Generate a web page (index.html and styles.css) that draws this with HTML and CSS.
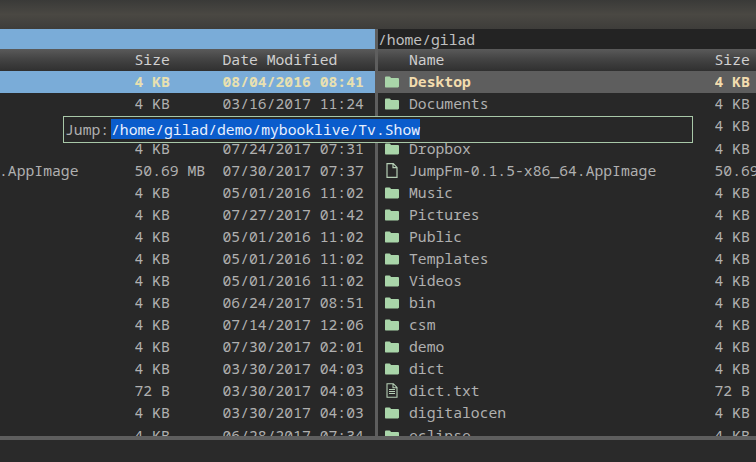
FILE: index.html
```html
<!DOCTYPE html>
<html lang="en">
<head>
<meta charset="utf-8">
<title>JumpFm</title>
<link rel="stylesheet" href="styles.css">
</head>
<body>
<svg class="defs" width="0" height="0" aria-hidden="true">
  <symbol id="folder" viewBox="0 0 14 12"><path d="M0 1.6C0 .9.5.4 1.2.4h3.2c.5 0 .8.2 1 .6l.5.9h7c.6 0 1.1.5 1.1 1.1v7.2c0 .7-.5 1.2-1.1 1.2H1.2C.5 11.600 0 11.100 0 10.400Z" fill="#a9d5a9"/></symbol>
  <symbol id="file" viewBox="0 0 12 15"><path d="M1 .7h6.300L11 4.400v9.900H1ZM7 .7v4h4" fill="none" stroke="#b5ceb5" stroke-width="1.200"/></symbol>
  <symbol id="text" viewBox="0 0 12 15"><path d="M1 .7h6.300L11 4.400v9.900H1ZM7 .7v4h4M3 6.500h6M3 8.500h6M3 10.500h6" fill="none" stroke="#b5ceb5" stroke-width="1.100"/></symbol>
</svg>
<div class="app">
  <div class="topbar"></div>
  <div class="panes">
    <section class="pane pane-left">
      <div class="path path-active"></div>
      <div class="row head"><span></span><span>Size</span><span>Date Modified</span></div>
      <div class="list">
        <div class="row selected-active"><span></span><span>4 KB</span><span>08/04/2016 08:41</span></div>
        <div class="row"><span></span><span>4 KB</span><span>03/16/2017 11:24</span></div>
        <div class="row"><span></span><span>4 KB</span><span>07/24/2017 07:31</span></div>
        <div class="row"><span></span><span>4 KB</span><span>07/24/2017 07:31</span></div>
        <div class="row"><span class="clipped-name">.AppImage</span><span>50.69 MB</span><span>07/30/2017 07:37</span></div>
        <div class="row"><span></span><span>4 KB</span><span>05/01/2016 11:02</span></div>
        <div class="row"><span></span><span>4 KB</span><span>07/27/2017 01:42</span></div>
        <div class="row"><span></span><span>4 KB</span><span>05/01/2016 11:02</span></div>
        <div class="row"><span></span><span>4 KB</span><span>05/01/2016 11:02</span></div>
        <div class="row"><span></span><span>4 KB</span><span>05/01/2016 11:02</span></div>
        <div class="row"><span></span><span>4 KB</span><span>06/24/2017 08:51</span></div>
        <div class="row"><span></span><span>4 KB</span><span>07/14/2017 12:06</span></div>
        <div class="row"><span></span><span>4 KB</span><span>07/30/2017 02:01</span></div>
        <div class="row"><span></span><span>4 KB</span><span>03/30/2017 04:03</span></div>
        <div class="row"><span></span><span>72 B</span><span>03/30/2017 04:03</span></div>
        <div class="row"><span></span><span>4 KB</span><span>03/30/2017 04:03</span></div>
        <div class="row"><span></span><span>4 KB</span><span>06/28/2017 07:34</span></div>
      </div>
    </section>
    <section class="pane pane-right">
      <div class="path">/home/gilad</div>
      <div class="row head"><span></span><span>Name</span><span>Size</span></div>
      <div class="list">
        <div class="row selected-idle"><svg class="icon"><use href="#folder"/></svg><span>Desktop</span><span>4 KB</span></div>
        <div class="row"><svg class="icon"><use href="#folder"/></svg><span>Documents</span><span>4 KB</span></div>
        <div class="row"><svg class="icon"><use href="#folder"/></svg><span>Downloads</span><span>4 KB</span></div>
        <div class="row"><svg class="icon"><use href="#folder"/></svg><span>Dropbox</span><span>4 KB</span></div>
        <div class="row"><svg class="icon icon-file"><use href="#file"/></svg><span>JumpFm-0.1.5-x86_64.AppImage</span><span>50.69 MB</span></div>
        <div class="row"><svg class="icon"><use href="#folder"/></svg><span>Music</span><span>4 KB</span></div>
        <div class="row"><svg class="icon"><use href="#folder"/></svg><span>Pictures</span><span>4 KB</span></div>
        <div class="row"><svg class="icon"><use href="#folder"/></svg><span>Public</span><span>4 KB</span></div>
        <div class="row"><svg class="icon"><use href="#folder"/></svg><span>Templates</span><span>4 KB</span></div>
        <div class="row"><svg class="icon"><use href="#folder"/></svg><span>Videos</span><span>4 KB</span></div>
        <div class="row"><svg class="icon"><use href="#folder"/></svg><span>bin</span><span>4 KB</span></div>
        <div class="row"><svg class="icon"><use href="#folder"/></svg><span>csm</span><span>4 KB</span></div>
        <div class="row"><svg class="icon"><use href="#folder"/></svg><span>demo</span><span>4 KB</span></div>
        <div class="row"><svg class="icon"><use href="#folder"/></svg><span>dict</span><span>4 KB</span></div>
        <div class="row"><svg class="icon icon-file"><use href="#text"/></svg><span>dict.txt</span><span>72 B</span></div>
        <div class="row"><svg class="icon"><use href="#folder"/></svg><span>digitalocen</span><span>4 KB</span></div>
        <div class="row"><svg class="icon"><use href="#folder"/></svg><span>eclipse</span><span>4 KB</span></div>
      </div>
    </section>
  </div>
  <div class="statusbar"></div>
  <div class="jump"><span class="jump-label">Jump:</span><span class="jump-value">/home/gilad/demo/mybooklive/Tv.Show</span></div>
</div>
</body>
</html>
```
FILE: styles.css
```css
* { box-sizing: border-box; }
html, body { margin: 0; height: 100%; overflow: hidden; }
body {
  background: #282828;
  color: #b0b0b0;
  font-family: "Noto Sans Mono", "DejaVu Sans Mono", "Liberation Mono", monospace;
  font-size: 14.72px;
}
.defs { position: absolute; }
.app { position: relative; display: flex; flex-direction: column; width: 756px; height: 462px; }
.topbar {
  height: 29px;
  background: linear-gradient(#3a3a38, #4a4843 50%, #3e3d3a);
}
.panes { display: flex; height: 407px; overflow: hidden; }
.pane { display: flex; flex-direction: column; min-width: 0; overflow: hidden; }
.pane-left { width: 375px; }
.pane-right { flex: 1; border-left: 3px solid #5e5e5e; }
.path { flex: none; height: 20px; line-height: 20px; background: #232323; color: #c0c0c0; white-space: nowrap; }
.path-active { background: #7aacd8; }
.row {
  display: grid;
  height: 22.08px;
  line-height: 21.6px;
  white-space: nowrap;
  align-items: start;
}
.head { flex: none; height: 22px; line-height: 21px; }
.pane-left .row { grid-template-columns: 134.5px 88px 1fr; }
.pane-right .row { grid-template-columns: 31px 305.5px 1fr; }
.row span { overflow: hidden; }
.clipped-name { text-indent: -1px; }
.head {
  background: linear-gradient(#5a5a5a, #444 45%, #303030);
  color: #d0d0d0;
}
.list { flex: 1; overflow: hidden; padding-top: 0.3px; }
.selected-active { background: #7aacd8; color: #e8e0b0; font-weight: bold; }
.selected-idle { background: #5e5e5e; color: #f2dcae; font-weight: bold; }
.icon { width: 14px; height: 12px; margin: 5px 0 0 7px; }
.icon-file { width: 12px; height: 15px; margin: 3px 0 0 8px; }
.statusbar { flex: 1; border-top: 4px solid #5e5e5e; background: #2a2a2a; }
.jump {
  position: absolute;
  left: 63px;
  top: 116px;
  width: 630px;
  height: 27px;
  display: flex;
  align-items: center;
  padding: 0 0 2px 1px;
  border: 1px solid #a8c8a8;
  background: #282828;
  white-space: nowrap;
}
.jump-label { width: 46px; color: #b0b0b0; }
.jump-value { background: #0a5ccc; color: #e8f0ff; line-height: 20px; }
```
